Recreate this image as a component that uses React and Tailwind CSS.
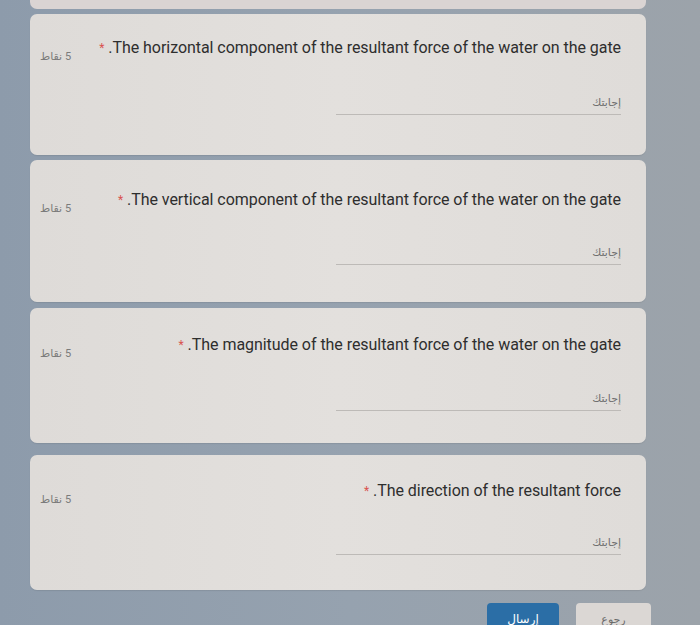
import React from "react";

const cards = [
  { q: "The horizontal component of the resultant force of the water on the gate", h: "h-[141px]", pt: "pt-[24px]", mt: "mt-[38px]" },
  { q: "The vertical component of the resultant force of the water on the gate", h: "h-[142px]", pt: "pt-[30px]", mt: "mt-[36px]" },
  { q: "The magnitude of the resultant force of the water on the gate", h: "h-[135px]", pt: "pt-[27px]", mt: "mt-[37px]" },
  { q: "The direction of the resultant force", h: "h-[135px]", pt: "pt-[26px]", mt: "mt-[35px]" },
];

function Card({ c }) {
  return (
    <div className={`w-[616px] ${c.h} ${c.pt} rounded-[7px] bg-gradient-to-r from-[#dedbd8] via-[#e3e0dd] to-[#dfdcd9] pl-[10px] pr-[25px] flex flex-col shadow-[0_1px_1px_rgba(0,0,0,0.08)]`}>
      <div className="flex justify-between items-start h-[20px]">
        <span dir="rtl" className="mt-[12px] text-[11px] leading-[13px] text-[#7b7b7b] whitespace-nowrap">5 نقاط</span>
        <span className="text-[16px] leading-[20px] text-[#2e2e2e] whitespace-nowrap tracking-[-0.05px]">
          <span className="text-[#d9534f] text-[12px] mr-[4px] align-top">*</span>.{c.q}
        </span>
      </div>
      <div className={`self-end w-[285px] ${c.mt} flex flex-col`}>
        <span dir="rtl" className="text-right text-[11px] leading-[14px] text-[#6f6f6f]">إجابتك</span>
        <div className="mt-[4px] h-px bg-[#bdbab7]"></div>
      </div>
    </div>
  );
}

export default function App() {
  return (
    <div
      className="w-[700px] h-[625px] overflow-hidden bg-gradient-to-r from-[#8d9bab] via-[#96a2af] to-[#9ca3aa] pl-[30px] flex flex-col"
      style={{ fontFamily: "Roboto, 'DejaVu Sans', sans-serif" }}
    >
      <div className="w-[616px] h-[9px] rounded-b-[7px] bg-[#dad4d3] shrink-0"></div>
      <div className="mt-[5px] flex flex-col">
        <Card c={cards[0]} />
        <div className="h-[5px]"></div>
        <Card c={cards[1]} />
        <div className="h-[6px]"></div>
        <Card c={cards[2]} />
        <div className="h-[12px]"></div>
        <Card c={cards[3]} />
      </div>
      <div className="mt-[13px] flex gap-[17px] pl-[457px]">
        <div dir="rtl" className="w-[72px] h-[26px] rounded-[4px] bg-[#2b6ea6] text-white text-[12px] flex items-center justify-center pt-[6px]">إرسال</div>
        <div dir="rtl" className="w-[75px] h-[26px] rounded-[4px] bg-[#dbd7d4] text-[#6a6a6a] text-[11px] flex items-center justify-center pt-[8px]">رجوع</div>
      </div>
    </div>
  );
}
